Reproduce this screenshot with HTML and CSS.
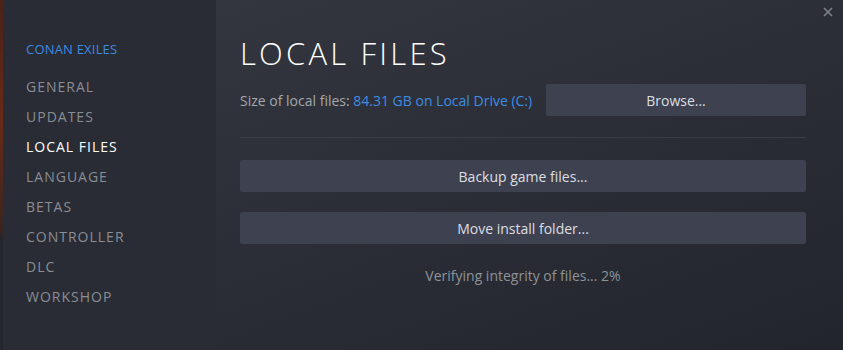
FILE: index.html
```html
<!DOCTYPE html>
<html>
<head>
<meta charset="utf-8">
<link rel="stylesheet" href="styles.css">
</head>
<body>
<div class="window">
  <div class="edge"></div>
  <nav class="sidebar">
    <div class="game">CONAN EXILES</div>
    <ul class="menu">
      <li>GENERAL</li>
      <li>UPDATES</li>
      <li class="active">LOCAL FILES</li>
      <li>LANGUAGE</li>
      <li>BETAS</li>
      <li>CONTROLLER</li>
      <li>DLC</li>
      <li>WORKSHOP</li>
    </ul>
  </nav>
  <main class="content">
    <h1 class="title">LOCAL FILES</h1>
    <div class="size-row">
      <div class="size">Size of local files: <span class="value">84.31 GB on Local Drive (C:)</span></div>
      <button class="btn browse">Browse...</button>
    </div>
    <div class="sep"></div>
    <button class="btn wide">Backup game files...</button>
    <button class="btn wide">Move install folder...</button>
    <div class="status">Verifying integrity of files... 2%</div>
  </main>
  <div class="close">
    <svg width="10" height="10" viewBox="0 0 10 10"><path d="M1 1 L9 9 M9 1 L1 9" stroke="#7d838c" stroke-width="1.6"/></svg>
  </div>
</div>
</body>
</html>
```
FILE: styles.css
```css
html, body {
  margin: 0;
  padding: 0;
  width: 843px;
  height: 350px;
  overflow: hidden;
  background: #23262d;
}
.window {
  position: relative;
  display: flex;
  width: 843px;
  height: 350px;
  font-family: "Open Sans", "Liberation Sans", sans-serif;
}
.edge {
  width: 3px;
  height: 350px;
  background: linear-gradient(180deg, #4a2218 0px, #6a2a18 120px, #3a2520 230px, #23262d 240px);
}
.sidebar {
  width: 213px;
  background: #292c34;
  padding-top: 39px;
  box-sizing: border-box;
  padding-left: 23px;
}
.game {
  color: #3d8ae0;
  font-size: 13px;
  letter-spacing: 0.2px;
  line-height: 20px;
  margin-bottom: 13px;
}
.menu {
  list-style: none;
  margin: 0;
  padding: 0;
}
.menu li {
  color: #898d95;
  font-size: 14px;
  letter-spacing: 1px;
  line-height: 30px;
}
.menu li.active {
  color: #ffffff;
}
.content {
  flex: 1;
  background: linear-gradient(160deg, #33363e 0%, #2b2e36 45%, #22252c 100%);
  padding: 37px 37px 0 24px;
  display: flex;
  flex-direction: column;
}
.title {
  margin: 0;
  color: #ffffff;
  font-weight: 300;
  font-size: 31px;
  letter-spacing: 3.2px;
  line-height: 32px;
  height: 32px;
}
.size-row {
  display: flex;
  align-items: center;
  justify-content: space-between;
  margin-top: 15px;
}
.size {
  color: #a3a7ae;
  font-size: 14px;
}
.value {
  color: #3f8de3;
}
.btn {
  display: block;
  border: none;
  background: #3e4250;
  color: #dcdee2;
  font-family: "Open Sans", "Liberation Sans", sans-serif;
  font-size: 14px;
  height: 32px;
  padding: 0;
  border-radius: 2px;
}
.browse {
  width: 260px;
}
.sep {
  height: 1px;
  background: #393c45;
  margin-top: 21px;
  margin-bottom: 22px;
}
.wide {
  width: 100%;
  margin-bottom: 20px;
}
.status {
  text-align: center;
  color: #8e9299;
  font-size: 14px;
  margin-top: 2px;
}
.close {
  position: absolute;
  top: 7px;
  right: 10px;
  width: 10px;
  height: 10px;
}
.close svg { display: block; }
```
